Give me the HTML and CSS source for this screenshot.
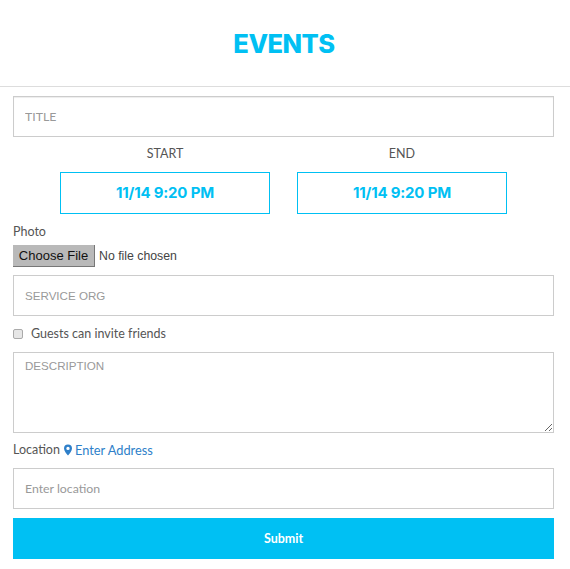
FILE: index.html
```html
<!DOCTYPE html>
<html lang="en">
<head>
<meta charset="utf-8">
<title>Events</title>
<link rel="stylesheet" href="styles.css">
</head>
<body>
<header class="header"><h1 class="title">EVENTS</h1></header>
<form class="form">
  <input class="field field-first" type="text" placeholder="TITLE">
  <div class="dates">
    <div class="date">
      <div class="date-label">START</div>
      <div class="date-box">11/14 9:20 PM</div>
    </div>
    <div class="date">
      <div class="date-label">END</div>
      <div class="date-box">11/14 9:20 PM</div>
    </div>
  </div>
  <label class="label photo-label">Photo</label>
  <input class="file" type="file">
  <input class="field field-org" type="text" placeholder="SERVICE ORG">
  <label class="check-row"><input class="check" type="checkbox"><span>Guests can invite friends</span></label>
  <textarea class="field area" placeholder="DESCRIPTION"></textarea>
  <div class="label location-row">Location
    <a class="address" href="#"><svg class="pin" viewBox="0 0 10 14" width="8" height="12"><path fill-rule="evenodd" d="M5 0a5 5 0 0 1 5 5c0 2.6-3 6.600-5 9C3 11.600 0 7.600 0 5a5 5 0 0 1 5-5zm0 2.900a2.100 2.100 0 1 0 0 4.200 2.100 2.100 0 0 0 0-4.200z"/></svg> Enter Address</a>
  </div>
  <input class="field field-location" type="text" placeholder="Enter location">
  <button class="submit" type="button">Submit</button>
</form>
</body>
</html>
```
FILE: styles.css
```css
* { box-sizing: border-box; }
html, body { margin: 0; padding: 0; background: #fff; }
body { font-family: Lato, "Liberation Sans", sans-serif; color: #555; font-size: 13px; }
.header { height: 87px; padding: 2px 2px 0 0; border-bottom: 1px solid #ddd; display: flex; align-items: center; justify-content: center; }
.title { margin: 0; font-family: Inter, Lato, sans-serif; font-size: 25.500px; font-weight: 800; letter-spacing: -0.5px; color: #00c0f3; line-height: 1; }
.form { display: flex; flex-direction: column; padding: 9px 16px 0 13px; }
.field { display: block; width: 100%; height: 41px; border: 1px solid #ccc; border-radius: 0; background: #fff; padding: 0 11px; font-family: Lato, "Liberation Sans", sans-serif; font-size: 12.300px; color: #555; outline: none; }
.field::placeholder { color: #999; opacity: 1; }
.field-first { box-shadow: inset 0 1px 1px rgba(0,0,0,.075); }
.field-org { font-family: "Liberation Sans", sans-serif; font-size: 11.600px; margin-top: 8px; }
.dates { display: flex; justify-content: center; gap: 27px; margin-top: 9px; padding-left: 6px; padding-right: 6px; width: 100%; }
.date { width: 210px; display: flex; flex-direction: column; align-items: center; }
.date-label { font-size: 12.500px; line-height: 15px; color: #555; margin-bottom: 11px; }
.date-box { width: 100%; height: 42px; padding-bottom: 1px; border: 1px solid #00c0f3; color: #00c0f3; font-family: Inter, Lato, sans-serif; font-size: 15px; font-weight: 700; letter-spacing: -0.2px; display: flex; align-items: center; justify-content: center; }
.label { font-size: 12.500px; color: #555; }
.photo-label { margin-top: 10px; line-height: 15px; }
.file { display: block; margin-top: 6px; height: 22px; font-family: "Liberation Sans", sans-serif; font-size: 12.300px; color: #444; }
.file::file-selector-button { height: 22px; width: 82px; margin-right: 4px; padding: 0; background: #b9b9b9; border: 0; border-right: 1px solid #777; border-bottom: 1px solid #777; border-radius: 0; font-family: "Liberation Sans", sans-serif; font-size: 13px; color: #111; }
.check-row { display: flex; align-items: center; gap: 8px; margin-top: 10px; height: 15px; font-size: 12.500px; color: #555; }
.check { appearance: none; width: 10px; height: 10px; margin: 0; background: #e6e6e6; border: 1px solid #aaa; border-radius: 2px; }
.area { height: 81px; margin-top: 11px; padding: 6px 11px; font-family: "Liberation Sans", sans-serif; font-size: 11.600px; resize: vertical; }
.location-row { display: flex; align-items: center; gap: 4px; height: 15px; margin-top: 9px; }
.address { display: inline-flex; align-items: center; gap: 3px; color: #2e7fc9; font-size: 12.800px; text-decoration: none; }
.pin { fill: #2e7fc9; }
.field-location { margin-top: 11px; }
.submit { display: block; width: 100%; height: 41px; margin-top: 9px; border: 0; background: #00c0f3; color: #fff; font-family: Lato, "Liberation Sans", sans-serif; font-size: 12.500px; font-weight: 700; }
```
